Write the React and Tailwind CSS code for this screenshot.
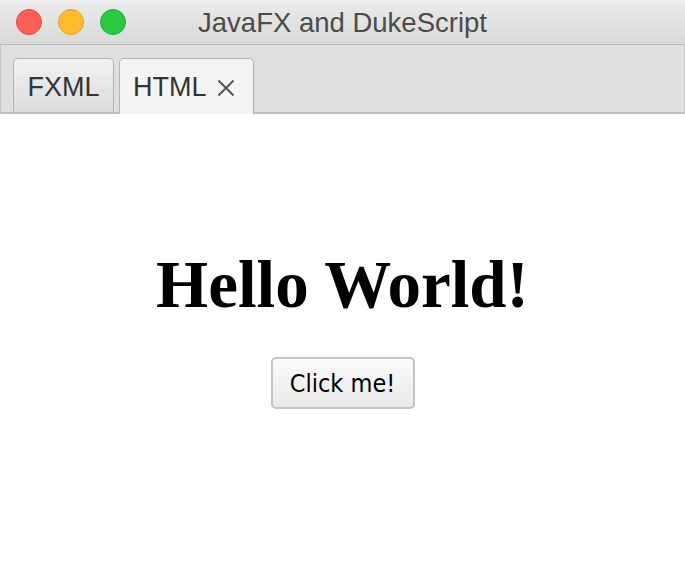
export default function App() {
  return (
    <div className="w-[685px] h-[561px] bg-white flex flex-col overflow-hidden">
      <div className="h-[45px] bg-gradient-to-b from-[#ececec] to-[#d9d9d9] border-b border-[#b9b9b9] relative flex items-center justify-center">
        <div className="absolute left-[16px] top-[9px] flex gap-[16px]">
          <div className="w-[26px] h-[26px] rounded-full bg-[#fc5f57] border border-[#e2463f]" />
          <div className="w-[26px] h-[26px] rounded-full bg-[#fdbc2e] border border-[#e0a123]" />
          <div className="w-[26px] h-[26px] rounded-full bg-[#2ac940] border border-[#1eab2f]" />
        </div>
        <span className="text-[27.5px] text-[#4b4b4b] font-['Liberation_Sans',sans-serif] leading-none mt-[1px]">
          JavaFX and DukeScript
        </span>
      </div>
      <div className="h-[69px] bg-[#dfdfdf] border-b-2 border-[#bfbfbf] border-x border-x-[#c9c9c9] flex items-end pl-[12px] gap-[5px]">
        <div className="w-[101px] h-[54px] rounded-t-[5px] border border-b-0 border-[#b5b5b5] bg-gradient-to-b from-[#f2f2f2] to-[#dcdcdc] flex items-center justify-center">
          <span className="text-[27px] text-[#333] font-['Liberation_Sans',sans-serif] leading-none mt-[4px]">FXML</span>
        </div>
        <div className="w-[135px] h-[56px] rounded-t-[5px] border border-b-0 border-[#b5b5b5] bg-[#f4f4f4] flex items-center pl-[13px] mb-[-2px] pb-[2px]">
          <span className="text-[27px] text-[#333] font-['Liberation_Sans',sans-serif] leading-none mt-[4px]">HTML</span>
          <svg className="ml-[10px] mt-[4px]" width="18" height="18" viewBox="0 0 18 18">
            <path d="M1.5 1.5 L16.5 16.5 M16.5 1.5 L1.5 16.5" stroke="#555" strokeWidth="2" fill="none" />
          </svg>
        </div>
      </div>
      <div className="flex-1 flex flex-col items-center">
        <h1 className="mt-[137px] text-[67px] font-bold text-black font-['Liberation_Serif',serif] leading-none">
          Hello World!
        </h1>
        <button className="mt-[39px] w-[144px] h-[52px] rounded-[5px] border-2 border-[#c4c4c4] bg-gradient-to-b from-[#fbfbfb] to-[#e9e9e9] text-[25px] text-black font-['DejaVu_Sans_Condensed','DejaVu_Sans',sans-serif] leading-none">
          Click me!
        </button>
      </div>
    </div>
  )
}
